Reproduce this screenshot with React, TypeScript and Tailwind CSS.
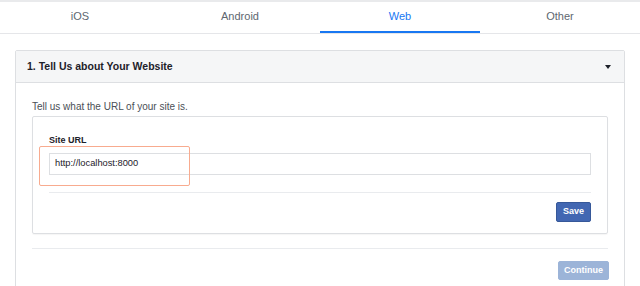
import React from "react";

export default function App() {
  const tabs = ["iOS", "Android", "Web", "Other"];
  return (
    <div className="w-[640px] h-[286px] overflow-hidden bg-white font-['Liberation_Sans',Arial,sans-serif]">
      <div className="border-t-2 border-[#e9eaec] border-b border-b-[#e5e6e9] flex">
        {tabs.map((t) =>
          t === "Web" ? (
            <div key={t} className="w-[160px] h-[31px] flex items-center justify-center border-b-2 border-[#1877f2] text-[11px] text-[#1877f2]">
              {t}
            </div>
          ) : (
            <div key={t} className="w-[160px] h-[31px] pb-[2px] flex items-center justify-center text-[11px] text-[#606770]">
              {t}
            </div>
          )
        )}
      </div>

      <div className="ml-[15px] mt-[16px] w-[610px] h-[260px] border border-[#dddfe2] rounded-[2px]">
        <div className="h-[32px] bg-[#f5f6f7] border-b border-[#dddfe2] flex items-center justify-between pl-[11px] pr-[13px]">
          <span className="text-[10.5px] font-bold text-[#1d2129]">1. Tell Us about Your Website</span>
          <span className="w-0 h-0 border-l-[3px] border-r-[3px] border-t-[4px] border-l-transparent border-r-transparent border-t-[#1d2129]" />
        </div>

        <div className="px-4">
          <div className="pt-[17px] mb-[2px] leading-[14px] text-[10px] text-[#4b4f56]">
            Tell us what the URL of your site is.
          </div>

          <div className="relative border border-[#dddfe2] rounded-[2px] px-4 pt-[17px] pb-[11px] shadow-[0_1px_1px_rgba(0,0,0,0.04)]">
            <div className="text-[9px] leading-[12px] font-bold text-[#1d2129]">Site URL</div>
            <div className="mt-[7px] h-[22px] border border-[#dddfe2] flex items-center pl-[5px] text-[9.3px] text-[#1d2129]">
              http://localhost:8000
            </div>
            <div className="mt-[17px] border-t border-[#e9ebee]" />
            <div className="mt-[9px] flex justify-end">
              <button className="w-[35px] h-[20px] bg-[#4267b2] border border-[#365899] rounded-[2px] text-white text-[9px] font-bold flex items-center justify-center">
                Save
              </button>
            </div>
            <div className="absolute left-[6px] top-[29px] w-[151px] h-[40px] border border-[#f8ab8f] rounded-[2px] pointer-events-none" />
          </div>

          <div className="mt-[14px] border-t border-[#e9ebee]" />
          <div className="mt-[12px] flex justify-end -mr-[1px]">
            <button className="w-[51px] h-[19px] bg-[#9cb4d8] border border-[#9cb4d8] rounded-[2px] text-white text-[9px] font-bold flex items-center justify-center">
              Continue
            </button>
          </div>
        </div>
      </div>
    </div>
  );
}
